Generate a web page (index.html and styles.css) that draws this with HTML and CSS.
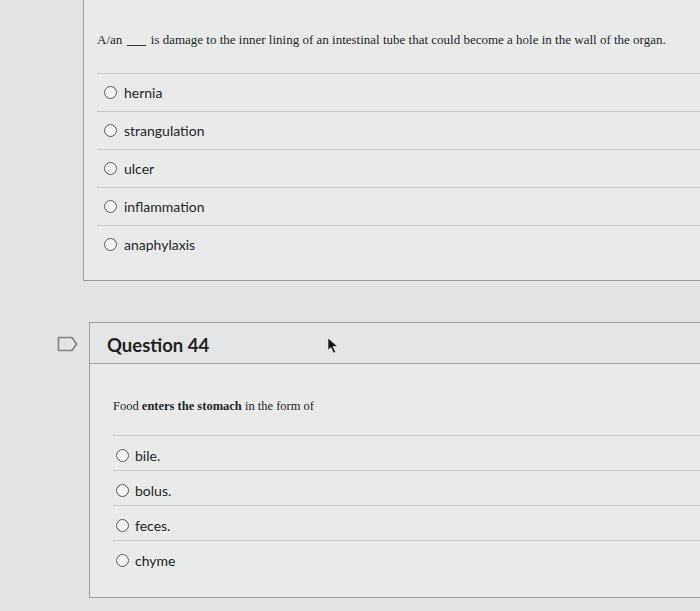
FILE: index.html
```html
<!DOCTYPE html>
<html>
<head>
<meta charset="utf-8">
<link rel="stylesheet" href="styles.css">
</head>
<body>
<div class="page">
  <div class="card card-first">
    <div class="qbody">
      <p class="qtext">A/an <span class="blank"></span> is damage to the inner lining of an intestinal tube that could become a hole in the wall of the organ.</p>
      <ul class="answers">
        <li><span class="radio"></span>hernia</li>
        <li><span class="radio"></span>strangulation</li>
        <li><span class="radio"></span>ulcer</li>
        <li><span class="radio"></span>inflammation</li>
        <li><span class="radio"></span>anaphylaxis</li>
      </ul>
    </div>
  </div>

  <div class="qrow">
    <div class="flag">
      <svg width="21" height="16" viewBox="0 0 21 16"><path d="M1.5 1.5 H15 L19.5 8 L15 14.5 H1.5 Z" fill="none" stroke="#7d8080" stroke-width="1.6" stroke-linejoin="round"/></svg>
    </div>
    <div class="card card-second">
      <div class="qheader">
        <h2>Question 44</h2>
        <svg class="cursor" width="12" height="17" viewBox="0 0 12 17"><path d="M1 1 L1 13 L4 10.5 L6.5 16 L8.5 15 L6 9.5 L10.5 9.5 Z" fill="#111" stroke="#eee" stroke-width="0.6"/></svg>
      </div>
      <div class="qbody qbody2">
        <p class="qtext qtext2">Food <b>enters the stomach</b> in the form of</p>
        <ul class="answers answers2">
          <li><span class="radio"></span>bile.</li>
          <li><span class="radio"></span>bolus.</li>
          <li><span class="radio"></span>feces.</li>
          <li><span class="radio"></span>chyme</li>
        </ul>
      </div>
    </div>
  </div>
</div>
</body>
</html>
```

FILE: styles.css
```css
html, body {
  margin: 0;
  padding: 0;
}
body {
  background: #e3e5e5;
  width: 700px;
  height: 611px;
  overflow: hidden;
  color: #232526;
}
.page {
  padding-left: 83px;
}
.card {
  background: #e9ebeb;
  border-left: 1px solid #9ea1a1;
  border-bottom: 1px solid #9ea1a1;
  width: 640px;
}
.card-first {
  height: 280px;
}
.qbody {
  padding: 31px 0 0 13px;
}
.qtext {
  margin: 0;
  font-family: "Liberation Serif", "Times New Roman", serif;
  font-size: 13px;
  line-height: 18px;
  height: 42px;
  border-bottom: 1px solid #c9cbcb;
}
.blank {
  display: inline-block;
  width: 19px;
  height: 1px;
  background: #333;
  margin: 0 2px 0 1px;
  vertical-align: -2px;
}
.answers {
  list-style: none;
  margin: 0;
  padding: 0;
  font-family: Lato, "Liberation Sans", sans-serif;
  font-size: 14px;
}
.answers li {
  height: 37px;
  display: flex;
  align-items: center;
  padding-left: 7px;
  border-bottom: 1px solid #c9cbcb;
}
.answers li:last-child {
  border-bottom: none;
}
.radio {
  width: 11px;
  height: 11px;
  border: 1px solid #5a5d5e;
  border-radius: 50%;
  margin-right: 7px;
  background: #f2f3f3;
  flex: none;
}
.qrow {
  display: flex;
  margin-top: 41px;
  margin-left: -26px;
}
.flag {
  width: 29px;
  padding-top: 14px;
  flex: none;
}
.card-second {
  border-top: 1px solid #9ea1a1;
  height: 274px;
  margin-left: 3px;
}
.qheader {
  height: 36px;
  padding-top: 4px;
  border-bottom: 1px solid #a5a8a8;
  background: #e4e6e6;
  display: flex;
  align-items: center;
  position: relative;
  padding-left: 17px;
}
.qheader h2 {
  margin: 0;
  font-family: Lato, "Liberation Sans", sans-serif;
  font-weight: 700;
  font-size: 18.5px;
  color: #1f2122;
}
.cursor {
  position: absolute;
  left: 237px;
  top: 14px;
}
.qbody2 {
  padding: 33px 0 0 23px;
}
.qtext2 {
  font-size: 12.5px;
  height: 38px;
}
.answers2 li {
  height: 30px;
  padding-top: 4px;
  padding-left: 3px;
}
.answers2 .radio {
  margin-right: 6px;
}
```
